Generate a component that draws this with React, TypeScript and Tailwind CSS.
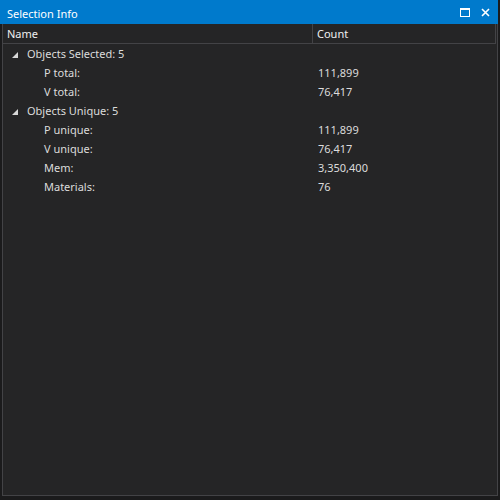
import React from "react";

type Row = {
  label: string;
  value?: string;
  group?: boolean;
};

const rows: Row[] = [
  { label: "Objects Selected: 5", group: true },
  { label: "P total:", value: "111,899" },
  { label: "V total:", value: "76,417" },
  { label: "Objects Unique: 5", group: true },
  { label: "P unique:", value: "111,899" },
  { label: "V unique:", value: "76,417" },
  { label: "Mem:", value: "3,350,400" },
  { label: "Materials:", value: "76" },
];

function Expander() {
  return (
    <svg width="6" height="6" viewBox="0 0 6 6" className="shrink-0">
      <polygon points="6,0 6,6 0,6" fill="#d8d8d8" />
    </svg>
  );
}

export default function App() {
  return (
    <div
      className="w-[500px] h-[500px] bg-[#1b1b1c] flex flex-col text-[11px] text-[#dcdcdc]"
      style={{ fontFamily: '"Noto Sans", "Open Sans", sans-serif' }}
    >
      {/* Title bar */}
      <div className="h-[24px] w-[498px] bg-[#007acc] flex items-center pl-[7px] pr-[8px] text-white shrink-0">
        <span className="flex-1 leading-none pt-[2px]">Selection Info</span>
        <svg width="10" height="9" viewBox="0 0 10 9" className="mr-[11px]">
          <rect x="0.5" y="0.5" width="9" height="8" fill="none" stroke="#fff" />
          <rect x="0" y="0" width="10" height="2" fill="#fff" />
        </svg>
        <svg width="9" height="9" viewBox="0 0 9 9">
          <path d="M1 1 L8 8 M8 1 L1 8" stroke="#fff" strokeWidth="1.6" />
        </svg>
      </div>

      {/* Body */}
      <div className="ml-[2px] w-[496px] h-[472px] bg-[#252526] border-l border-r border-b border-[#434346] flex flex-col">
        {/* Header */}
        <div className="h-[20px] w-[493px] flex border-b border-r border-[#434346] shrink-0">
          <div className="w-[310px] border-r border-[#434346] pl-[4px] pt-[1px] flex items-center text-[#f0f0f0]">
            Name
          </div>
          <div className="flex-1 pl-[4px] pt-[1px] flex items-center text-[#f0f0f0]">Count</div>
        </div>

        {/* Rows */}
        <div className="flex flex-col pt-[1px]">
          {rows.map((r) => (
            <div key={r.label} className="h-[19px] flex items-center">
              <div className="w-[311px] flex items-center">
                {r.group ? (
                  <div className="flex items-center pl-[9px] gap-[9px]">
                    <Expander />
                    <span>{r.label}</span>
                  </div>
                ) : (
                  <span className="pl-[41px]">{r.label}</span>
                )}
              </div>
              <div className="pl-[4px]">{r.value}</div>
            </div>
          ))}
        </div>
      </div>
    </div>
  );
}
